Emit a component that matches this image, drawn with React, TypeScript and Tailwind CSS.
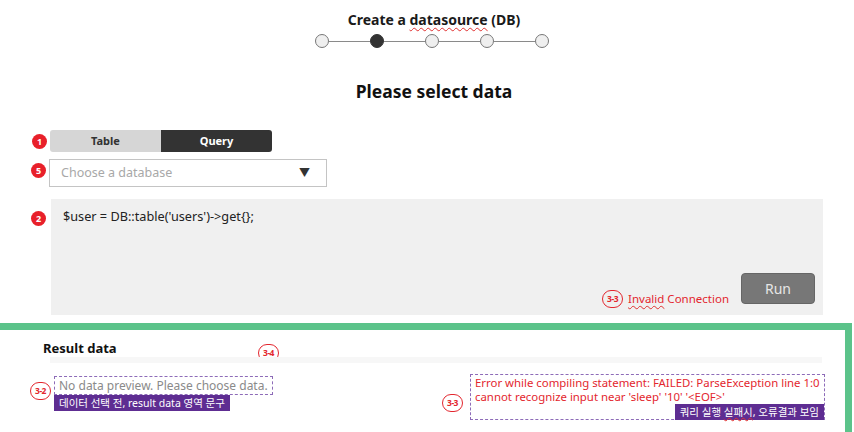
import React from 'react';

const font = { fontFamily: '"Noto Sans", "Noto Sans CJK KR", sans-serif' };

const NumBadge = ({ n }: { n: string }) => (
  <div className="flex h-[15px] w-[15px] shrink-0 items-center justify-center rounded-full bg-[#e8202a] text-[9px] font-bold leading-none text-white">
    {n}
  </div>
);

const RingBadge = ({ n }: { n: string }) => (
  <div className="flex h-[18px] w-[21px] shrink-0 items-center justify-center rounded-full border-[1.5px] border-[#e3262e] text-[8.5px] font-bold leading-none tracking-[-0.5px] text-[#e3262e]">
    {n}
  </div>
);

const steps = [false, true, false, false, false];

const Stepper = () => (
  <div className="flex items-center">
    {steps.map((active, i) => (
      <React.Fragment key={i}>
        {i > 0 && <div className="h-px w-[41px] bg-[#8a8a8a]" />}
        <div
          className={
            active
              ? 'h-[14px] w-[14px] rounded-full border border-[#333] bg-[#333]'
              : 'h-[14px] w-[14px] rounded-full border border-[#777] bg-[#efefef]'
          }
        />
      </React.Fragment>
    ))}
  </div>
);

export default function App() {
  return (
    <div className="h-[432px] w-[854px] overflow-hidden bg-white text-[#111]" style={font}>
      <div className="flex flex-col items-center pl-[14px] pt-[10px]">
        <h1 className="text-[14px] font-bold leading-[20px] text-[#1a1a1a]">
          Create a{' '}
          <span className="underline decoration-[#e03030] decoration-wavy decoration-1 underline-offset-2">datasource</span>{' '}
          (DB)
        </h1>
        <div className="mt-[4px] pr-[4px]">
          <Stepper />
        </div>
        <h2 className="mt-[30px] text-[17.5px] font-bold leading-[26px] text-[#111]">Please select data</h2>
      </div>

      <div className="mt-[26px] flex items-center gap-[3px] pl-[32px]">
        <NumBadge n="1" />
        <div className="flex h-[22px] w-[222px] overflow-hidden rounded-[3px] text-[11px] font-bold">
          <div className="flex flex-1 items-center justify-center bg-[#d6d6d6] text-[#333]">Table</div>
          <div className="flex flex-1 items-center justify-center bg-[#333] text-white">Query</div>
        </div>
      </div>

      <div className="mt-[7px] flex items-start gap-[3px] pl-[31px]">
        <div className="mt-[4px]">
          <NumBadge n="5" />
        </div>
        <div className="flex h-[28px] w-[278px] items-center justify-between border border-[#c4c4c4] pl-[11px] pr-[16px]">
          <span className="text-[12.5px] text-[#a8a8a8]">Choose a database</span>
          <span className="text-[11px] text-[#333]">▼</span>
        </div>
      </div>

      <div className="mt-[12px] flex items-start gap-[5px] pl-[31px]">
        <div className="mt-[12px]">
          <NumBadge n="2" />
        </div>
        <div className="flex h-[116px] w-[772px] flex-col bg-[#f0f0f0]">
          <div className="pl-[12px] pt-[8px] text-[12.7px] text-[#222]">$user = DB::table('users')-&gt;get{'{}'};</div>
          <div className="mt-auto flex items-end justify-end gap-[12px] pb-[11px] pr-[8px]">
            <div className="mb-[-4px] flex items-center gap-[5px]">
              <RingBadge n="3-3" />
              <span className="text-[11.5px] text-[#e3262e]">
                <span className="underline decoration-[#e03030] decoration-wavy decoration-1 underline-offset-2">Invalid</span>{' '}
                Connection
              </span>
            </div>
            <button className="flex h-[31px] w-[74px] items-center justify-center rounded-[4px] border border-[#666] bg-[#777] text-[14px] text-[#e6e6e6]">
              Run
            </button>
          </div>
        </div>
      </div>

      <div className="relative mt-[8px] h-[110px] w-[852px] border-r-[7px] border-t-[7px] border-[#5bc38a] bg-white">
        <div className="pl-[43px] pt-[9px] text-[13px] font-bold leading-[18px] text-[#111]">Result data</div>
        <div className="absolute left-[258px] top-[14px] h-[13px] overflow-hidden">
          <RingBadge n="3-4" />
        </div>
        <div className="ml-[50px] h-[6px] w-[772px] bg-[#f7f7f7]" />
        <div className="flex items-start justify-between pr-[20px]">
          <div className="flex items-start gap-[3px] pl-[30px] pt-[13px]">
            <div className="mt-[6px]">
              <RingBadge n="3-2" />
            </div>
            <div className="flex flex-col items-start">
              <div className="border border-dashed border-[#8d6bb8] px-[4px] text-[12px] leading-[17px] text-[#8a8a8a]">
                No data preview. Please choose data.
              </div>
              <div className="bg-[#5e2d92] px-[5px] text-[10.5px] leading-[16px] text-white">데이터 선택 전, result data 영역 문구</div>
            </div>
          </div>
          <div className="flex items-start gap-[7px] pt-[11px]">
            <div className="mt-[20px]">
              <RingBadge n="3-3" />
            </div>
            <div className="flex h-[46px] w-[355px] flex-col border border-dashed border-[#8d6bb8]">
              <div className="pl-[4px] pt-[1px] text-[11.4px] leading-[14px] text-[#e3262e]">
                Error while compiling statement: FAILED: ParseException line 1:0
                <br />
                cannot recognize input near 'sleep' '10' '&lt;EOF&gt;'
              </div>
              <div className="mt-auto self-end bg-[#5e2d92] px-[5px] text-[10.5px] leading-[16px] text-white">
                쿼리 실행{' '}
                <span className="underline decoration-[#e03030] decoration-wavy decoration-1">실패시</span>, 오류결과 보임
              </div>
            </div>
          </div>
        </div>
      </div>
    </div>
  );
}
